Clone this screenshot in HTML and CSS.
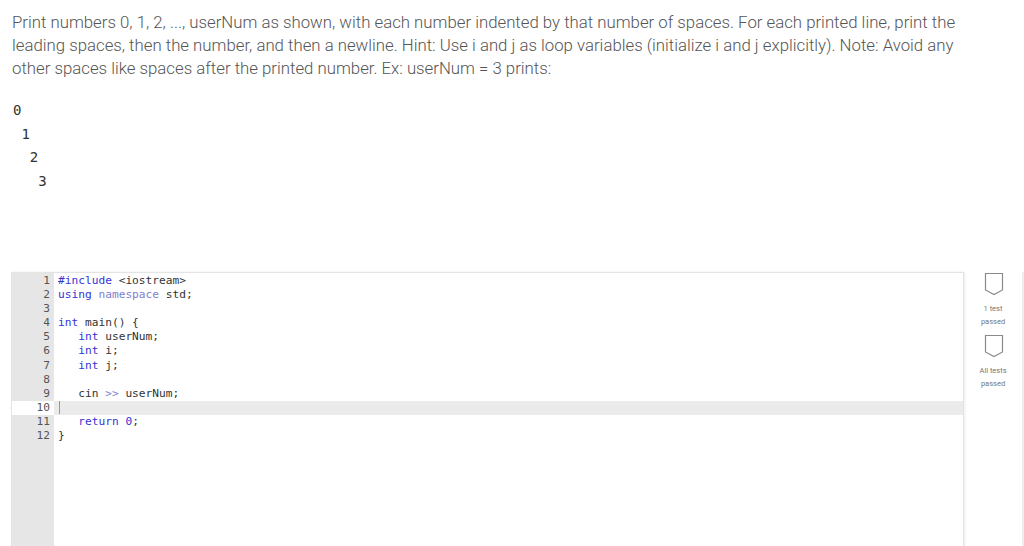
FILE: index.html
```html
<!DOCTYPE html>
<html>
<head>
<meta charset="utf-8">
<link rel="stylesheet" href="styles.css">
</head>
<body>
<div class="page">
  <p class="prompt">Print numbers 0, 1, 2, ..., userNum as shown, with each number indented by that number of spaces. For each printed line, print the leading spaces, then the number, and then a newline. Hint: Use i and j as loop variables (initialize i and j explicitly). Note: Avoid any other spaces like spaces after the printed number. Ex: userNum = 3 prints:</p>
  <pre class="sample">0
 1
  2
   3</pre>
  <div class="work">
    <div class="editor">
      <div class="gutter">
        <div class="ln">1</div><div class="ln">2</div><div class="ln">3</div><div class="ln">4</div><div class="ln">5</div><div class="ln">6</div><div class="ln">7</div><div class="ln">8</div><div class="ln">9</div><div class="ln active">10</div><div class="ln">11</div><div class="ln">12</div>
      </div>
      <div class="code">
        <div class="cl"><span class="kw">#include</span> <span class="str">&lt;iostream&gt;</span></div>
        <div class="cl"><span class="kw">using</span> <span class="lt">namespace</span> std;</div>
        <div class="cl">&nbsp;</div>
        <div class="cl"><span class="kw">int</span> main() {</div>
        <div class="cl">   <span class="kw">int</span> userNum;</div>
        <div class="cl">   <span class="kw">int</span> i;</div>
        <div class="cl">   <span class="kw">int</span> j;</div>
        <div class="cl">&nbsp;</div>
        <div class="cl">   cin <span class="lt">&gt;&gt;</span> userNum;</div>
        <div class="cl active"><span class="cursor"></span></div>
        <div class="cl">   <span class="kw">return</span> <span class="num">0</span>;</div>
        <div class="cl">}</div>
      </div>
    </div>
    <div class="status">
      <div class="badge">
        <svg width="20" height="24" viewBox="0 0 20 24"><path d="M1.5 1.5 H18.5 V18 L10 22.5 L1.5 18 Z" fill="#fff" stroke="#8a8a8a" stroke-width="1.2"/></svg>
        <div class="blabel">1 test<br>passed</div>
      </div>
      <div class="badge">
        <svg width="20" height="24" viewBox="0 0 20 24"><path d="M1.5 1.5 H18.5 V18 L10 22.5 L1.5 18 Z" fill="#fff" stroke="#8a8a8a" stroke-width="1.2"/></svg>
        <div class="blabel">All tests<br>passed</div>
      </div>
    </div>
  </div>
</div>
</body>
</html>
```

FILE: styles.css
```css
html, body {
  margin: 0;
  padding: 0;
  background: #fff;
  overflow: hidden;
}
.page {
  width: 1024px;
  height: 546px;
  padding: 11px 0 0 12px;
  box-sizing: border-box;
  overflow: hidden;
}
.prompt {
  margin: 0;
  width: 960px;
  font-family: Roboto, "Liberation Sans", sans-serif;
  font-weight: 300;
  font-size: 16.8px;
  line-height: 23px;
  color: #555;
}
.sample {
  margin: 19px 0 0 1px;
  font-family: "DejaVu Sans Mono", monospace;
  font-size: 14px;
  line-height: 23.5px;
  color: #333;
  height: 100px;
}
.work {
  display: flex;
  margin: 73px 0 0 -1px;
  height: 300px;
}
.editor {
  width: 951px;
  display: flex;
  border: 1px solid #e4e4e4;
  border-bottom: none;
  box-shadow: 1px 0 2px rgba(0,0,0,0.08);
  background: #fff;
}
.gutter {
  width: 42px;
  padding-top: 1px;
  background: #e6e6e6;
  flex: none;
}
.ln {
  height: 14.1px;
  line-height: 14.1px;
  text-align: right;
  padding-right: 4px;
  font-family: "DejaVu Sans Mono", monospace;
  font-size: 11.2px;
  color: #555;
}
.ln.active {
  background: #fff;
}
.code {
  flex: 1;
  padding-top: 1px;
}
.cl {
  height: 14.1px;
  line-height: 14.1px;
  padding-left: 4px;
  font-family: "DejaVu Sans Mono", monospace;
  font-size: 11.2px;
  color: #333;
  white-space: pre;
}
.cl.active {
  background: #ebebeb;
}
.cursor {
  display: inline-block;
  width: 1px;
  height: 13px;
  margin-left: 1px;
  vertical-align: top;
  background: #999;
}
.kw { color: #3434d6; }
.str { color: #333; }
.lt { color: #8080d0; }
.num { color: #3434d6; }
.status {
  flex: 1;
  display: flex;
  flex-direction: column;
  align-items: center;
  padding-top: 0;
  border-right: 2px solid #eee;
}
.badge {
  display: flex;
  flex-direction: column;
  align-items: center;
  margin-bottom: 6px;
}
.badge svg {
  display: block;
  margin-left: 2px;
}
.blabel {
  margin-top: 6px;
  font-family: Roboto, "Liberation Sans", sans-serif;
  font-size: 7.5px;
  line-height: 13px;
  color: #777;
  text-align: center;
}
```
